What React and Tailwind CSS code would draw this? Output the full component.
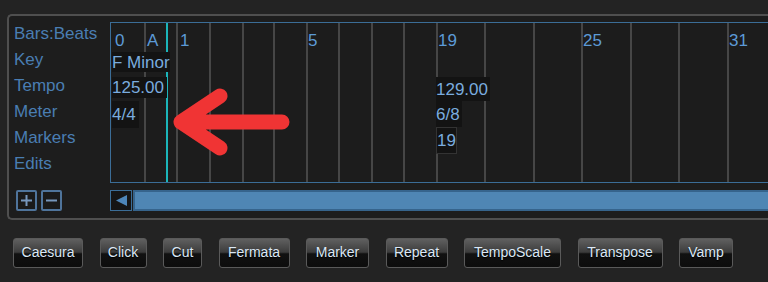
import React from "react";

const rows = ["Bars:Beats", "Key", "Tempo", "Meter", "Markers", "Edits"];

// bar line x positions inside the timeline canvas
const barLines = [33, 65, 98, 131, 162, 195, 227, 260, 292, 325, 373, 422, 470, 519, 567, 616];

const barNumbers = [
  { x: 4, label: "0" },
  { x: 36, label: "A" },
  { x: 69, label: "1" },
  { x: 197, label: "5" },
  { x: 327, label: "19" },
  { x: 472, label: "25" },
  { x: 618, label: "31" },
];

const events = [
  { x: 1, y: 29, w: 58, h: 20, label: "F Minor" },
  { x: 1, y: 54, w: 55, h: 21, label: "125.00" },
  { x: 1, y: 78, w: 27, h: 27, label: "4/4" },
  { x: 325, y: 54, w: 54, h: 24, label: "129.00" },
  { x: 325, y: 78, w: 26, h: 26, label: "6/8" },
  { x: 325, y: 104, w: 21, h: 27, label: "19", boxed: true },
];

const buttons = [
  { label: "Caesura", w: "w-[70px]" },
  { label: "Click", w: "w-[47px]" },
  { label: "Cut", w: "w-[39px]" },
  { label: "Fermata", w: "w-[71px]" },
  { label: "Marker", w: "w-[63px]" },
  { label: "Repeat", w: "w-[62px]" },
  { label: "TempoScale", w: "w-[97px]" },
  { label: "Transpose", w: "w-[85px]" },
  { label: "Vamp", w: "w-[54px]" },
];

function SmallButton({ minus }) {
  return (
    <button className="w-[21px] h-[21px] border-2 border-[#4f749b] rounded-[2px] bg-[#1a1a1a] flex items-center justify-center">
      <svg width="13" height="13" viewBox="0 0 13 13">
        <line x1="1" y1="6.5" x2="12" y2="6.5" stroke="#7697bd" strokeWidth="2" />
        {!minus && <line x1="6.5" y1="1" x2="6.5" y2="12" stroke="#7697bd" strokeWidth="2" />}
      </svg>
    </button>
  );
}

export default function App() {
  return (
    <div className="relative w-[768px] h-[282px] overflow-hidden bg-[#232323] flex flex-col font-['Liberation_Sans',Arial,sans-serif]">
      {/* Track panel */}
      <div className="ml-[7px] mt-[14px] w-[800px] h-[206px] shrink-0 border-2 border-r-0 border-[#4f4f4f] rounded-l-[5px] bg-[#1d1d1d] flex">
        {/* Row labels */}
        <div className="w-[101px] shrink-0 flex flex-col pl-[5px] pt-[5px]">
          {rows.map((r) => (
            <div key={r} className="h-[26px] leading-[26px] text-[17px] text-[#4a7eb3] whitespace-nowrap">
              {r}
            </div>
          ))}
          <div className="mt-[13px] ml-[2px] flex gap-[4px]">
            <SmallButton />
            <SmallButton minus />
          </div>
        </div>

        {/* Timeline */}
        <div className="flex-1 flex flex-col pt-[6px]">
          <div className="relative h-[161px] border border-r-0 border-[#3b6d97] bg-[#1c1c1c] overflow-hidden">
            {barLines.map((x) => (
              <div key={x} className="absolute top-0 bottom-0 w-[2px] bg-[#464646]" style={{ left: x }} />
            ))}
            <div className="absolute top-0 bottom-0 left-[55px] w-[2px] bg-[#1bb5ba]" />
            {barNumbers.map((b) => (
              <span
                key={b.label}
                className="absolute top-[9px] text-[17px] leading-[17px] text-[#5c9ad6]"
                style={{ left: b.x }}
              >
                {b.label}
              </span>
            ))}
            {events.map((e) => (
              <div
                key={e.label}
                className={`absolute flex items-center bg-[#131313] text-[17px] leading-none text-[#7aacdf] whitespace-nowrap ${
                  e.boxed ? "border border-[#333] justify-center" : ""
                }`}
                style={{ left: e.x, top: e.y, width: e.w, height: e.h }}
              >
                {e.label}
              </div>
            ))}
          </div>

          {/* Scrollbar */}
          <div className="mt-[7px] h-[21px] flex gap-[1px]">
            <div className="w-[22px] h-full border border-[#3b6d97] bg-[#151515] flex items-center justify-center">
              <svg width="11" height="11" viewBox="0 0 11 11">
                <polygon points="0,5.5 11,0 11,11" fill="#4d85b8" />
              </svg>
            </div>
            <div className="flex-1 h-full border-2 border-[#36648c] bg-[#4f86b4]" />
          </div>
        </div>
      </div>

      {/* Edit buttons */}
      <div className="mt-[18px] pl-[13px] flex gap-[16.5px]">
        {buttons.map((b) => (
          <button
            key={b.label}
            className={`${b.w} h-[30px] border border-[#5a5a5a] rounded-[3px] bg-[linear-gradient(to_bottom,#606060_0%,#3c3c3c_47%,#111111_53%,#0d0d0d_100%)] text-[14px] text-[#dce8f6] [text-shadow:0_1px_1px_#000] flex items-center justify-center pb-[2px]`}
          >
            {b.label}
          </button>
        ))}
      </div>

      {/* Annotation arrow */}
      <svg className="absolute inset-0 pointer-events-none" width="768" height="282" viewBox="0 0 768 282">
        <path
          d="M282 122 L182 122 M220 96 L181 122 L220 148"
          fill="none"
          stroke="#f03434"
          strokeWidth="15"
          strokeLinecap="round"
          strokeLinejoin="round"
        />
      </svg>
    </div>
  );
}
